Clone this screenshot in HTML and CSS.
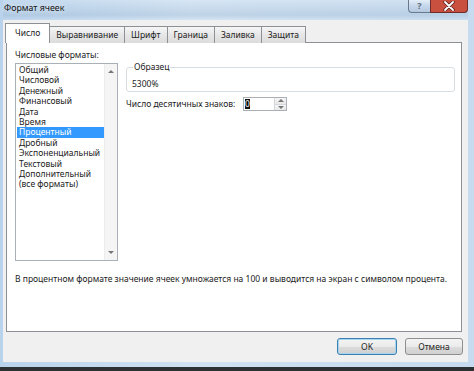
FILE: index.html
```html
<!DOCTYPE html>
<html>
<head>
    <meta charset="UTF-8">
    <title>Формат ячеек</title>
    <link rel="stylesheet" href="styles.css">
</head>
<body>
    <div class="window">
        <div class="titlebar">
            <span class="titlebar__text">Формат ячеек</span>
            <span class="cap-help">?</span>
            <span class="cap-close">
                <svg class="close-icon" width="12" height="10" viewBox="0 0 12 10">
                    <path d="M2 1 L10 9 M10 1 L2 9" stroke="#5a2020" stroke-width="3.4" stroke-linecap="round"/>
                    <path d="M2 1 L10 9 M10 1 L2 9" stroke="#ffffff" stroke-width="1.8" stroke-linecap="round"/>
                </svg>
            </span>
        </div>
        <div class="client">
            <div class="tabs">
                <div class="tab tab--active">Число</div>
                <div class="tab">Выравнивание</div>
                <div class="tab">Шрифт</div>
                <div class="tab">Граница</div>
                <div class="tab">Заливка</div>
                <div class="tab">Защита</div>
            </div>
            <div class="panel">
                <div class="panel__main">
                    <div class="formats">
                        <div class="formats__label">Числовые форматы:</div>
                        <div class="listbox">
                            <ul class="listbox__items">
                                <li>Общий</li>
                                <li>Числовой</li>
                                <li>Денежный</li>
                                <li>Финансовый</li>
                                <li>Дата</li>
                                <li>Время</li>
                                <li class="selected">Процентный</li>
                                <li>Дробный</li>
                                <li>Экспоненциальный</li>
                                <li>Текстовый</li>
                                <li>Дополнительный</li>
                                <li>(все форматы)</li>
                            </ul>
                            <div class="scroll">
                                <span class="scroll__up"></span>
                                <span class="scroll__down"></span>
                            </div>
                        </div>
                    </div>
                    <div class="options">
                        <fieldset class="sample">
                            <legend>Образец</legend>
                            <div class="sample__value">5300%</div>
                        </fieldset>
                        <div class="decimals">
                            <span class="decimals__label">Число десятичных знаков:</span>
                            <div class="spin">
                                <div class="spin__field"><span class="spin__sel">0</span></div>
                                <div class="spin__btns">
                                    <div class="spin__btn"><span class="arr-up"></span></div>
                                    <div class="spin__btn"><span class="arr-down"></span></div>
                                </div>
                            </div>
                        </div>
                    </div>
                </div>
                <div class="panel__desc">В процентном формате значение ячеек умножается на 100 и выводится на экран с символом процента.</div>
            </div>
            <div class="buttons">
                <button class="btn btn--default">OK</button>
                <button class="btn">Отмена</button>
            </div>
        </div>
    </div>
</body>
</html>
```

FILE: styles.css
```css
*, *::before, *::after {
    box-sizing: border-box;
    font-family: 'Noto Sans', 'DejaVu Sans', sans-serif;
}
body {
    margin: 0;
    width: 474px;
    height: 371px;
    background-color: #2e3134;
    overflow: hidden;
}
.window {
    width: 474px;
    height: 367px;
    padding: 0 6px 5px 3px;
    background: linear-gradient(to right, #b9d3ec, #cfe1f2 40%, #c6dbef);
    display: flex;
    flex-direction: column;
}
.titlebar {
    height: 20px;
    flex-shrink: 0;
    display: flex;
    align-items: flex-start;
    background: linear-gradient(to bottom, rgba(255,255,255,0.15), rgba(120,150,180,0.18) 75%, rgba(255,255,255,0.1));
}
.titlebar__text {
    flex: 1;
    font-size: 8.8px;
    line-height: 12px;
    color: #111;
    margin: 2px 0 0 1px;
    text-shadow: 0 0 6px #fff;
}
.cap-help {
    flex: 0 0 22px;
    height: 13px;
    border: 1px solid #6a7a8c;
    border-top: none;
    border-right: none;
    border-radius: 0 0 0 4px;
    background: linear-gradient(to bottom, #e4eef8, #c4d6ea 50%, #b4c9e0);
    color: #5d6b7a;
    font-size: 9px;
    font-weight: bold;
    line-height: 12px;
    text-align: center;
}
.cap-close {
    flex: 0 0 38px;
    height: 13px;
    border: 1px solid #6e2d2a;
    border-top: none;
    border-radius: 0 0 4px 0;
    background-color: #c9503f;
    display: flex;
    align-items: center;
    justify-content: center;
}
.close-icon {
    display: block;
}
.client {
    flex: 1;
    background-color: #f0f0f0;
    padding-top: 3px;
    display: flex;
    flex-direction: column;
}
.tabs {
    display: flex;
    align-items: flex-end;
    height: 20px;
    margin-left: 2px;
    position: relative;
    z-index: 1;
    margin-bottom: -1px;
}
.tab {
    height: 17px;
    padding: 0 6px;
    font-size: 8.5px;
    line-height: 16px;
    color: #222;
    border: 1px solid #8d9196;
    border-left: none;
    border-bottom: none;
    background: linear-gradient(to bottom, #f6f6f6, #e6e6e6 50%, #dcdcdc);
}
.tab--active {
    height: 20px;
    padding: 0 9px;
    line-height: 18px;
    border-left: 1px solid #8d9196;
    background: #fff;
}
.panel {
    height: 290px;
    margin: 0 6px 0 3px;
    border: 1px solid #8d9196;
    background-color: #fff;
    padding: 6px 6px 0 8px;
    display: flex;
    flex-direction: column;
    overflow: hidden;
}
.panel__main {
    display: flex;
    gap: 8px;
}
.formats {
    width: 103px;
    flex-shrink: 0;
}
.formats__label {
    font-size: 8.5px;
    line-height: 12px;
    color: #222;
}
.listbox {
    margin-top: 2px;
    height: 198px;
    border: 1px solid #aab0b8;
    display: flex;
    padding: 0 0 0 1px;
}
.listbox__items {
    flex: 1;
    list-style: none;
    margin: 0;
    padding: 1px 0 0 0;
}
.listbox__items li {
    font-size: 8.5px;
    line-height: 10.4px;
    height: 10.4px;
    padding-left: 2px;
    color: #222;
    white-space: nowrap;
}
.listbox__items li.selected {
    background-color: #3399ff;
    color: #fff;
}
.scroll {
    width: 13px;
    background-color: #f5f5f5;
    border-left: 1px solid #ececec;
    display: flex;
    flex-direction: column;
    justify-content: space-between;
    align-items: center;
    padding: 6px 0 6px;
}
.scroll__up, .arr-up {
    width: 0;
    height: 0;
    border-left: 3px solid transparent;
    border-right: 3px solid transparent;
    border-bottom: 3px solid #777;
}
.scroll__down, .arr-down {
    width: 0;
    height: 0;
    border-left: 3px solid transparent;
    border-right: 3px solid transparent;
    border-top: 3px solid #777;
}
.options {
    flex: 1;
    margin-top: 12px;
}
.sample {
    margin: 0;
    padding: 5px 0 1px 5px;
    border: 1px solid #d8dde2;
    border-radius: 3px;
    min-width: 0;
}
.sample legend {
    padding: 0 1px;
    margin-left: 1px;
    font-size: 8.5px;
    line-height: 12px;
    color: #222;
}
.sample__value {
    font-size: 8.5px;
    line-height: 12px;
    color: #222;
}
.decimals {
    margin-top: 5px;
    display: flex;
    align-items: center;
}
.decimals__label {
    width: 117px;
    font-size: 8.5px;
    line-height: 14px;
    color: #222;
    white-space: nowrap;
}
.spin {
    width: 44px;
    height: 14px;
    border: 1px solid #aab0b8;
    display: flex;
}
.spin__field {
    flex: 1;
    padding: 1px 0 0 1px;
}
.spin__sel {
    display: block;
    width: 5px;
    height: 10px;
    background-color: #111;
    color: #fff;
    font-size: 8.5px;
    line-height: 10px;
}
.spin__btns {
    width: 12px;
    display: flex;
    flex-direction: column;
    border-left: 1px solid #d4d8dc;
}
.spin__btn {
    flex: 1;
    background: linear-gradient(to bottom, #f7f7f7, #e8e8e8);
    border-bottom: 1px solid #d4d8dc;
    display: flex;
    align-items: center;
    justify-content: center;
}
.spin__btn:last-child {
    border-bottom: none;
}
.panel__desc {
    margin-top: 12px;
    font-size: 8.5px;
    line-height: 12px;
    color: #222;
    white-space: nowrap;
}
.buttons {
    display: flex;
    justify-content: flex-end;
    gap: 8px;
    margin: 6px 5px 0 0;
}
.btn {
    height: 17px;
    width: 58px;
    padding: 0;
    font-size: 8.5px;
    color: #222;
    border: 1px solid #8e8f8f;
    border-radius: 3px;
    background: linear-gradient(to bottom, #f4f4f4, #ebebeb 50%, #dcdcdc 51%, #d0d0d0);
}
.btn--default {
    width: 60px;
    border-color: #3c7fb1;
    box-shadow: inset 0 0 0 1px #a7d5ef;
}
```
